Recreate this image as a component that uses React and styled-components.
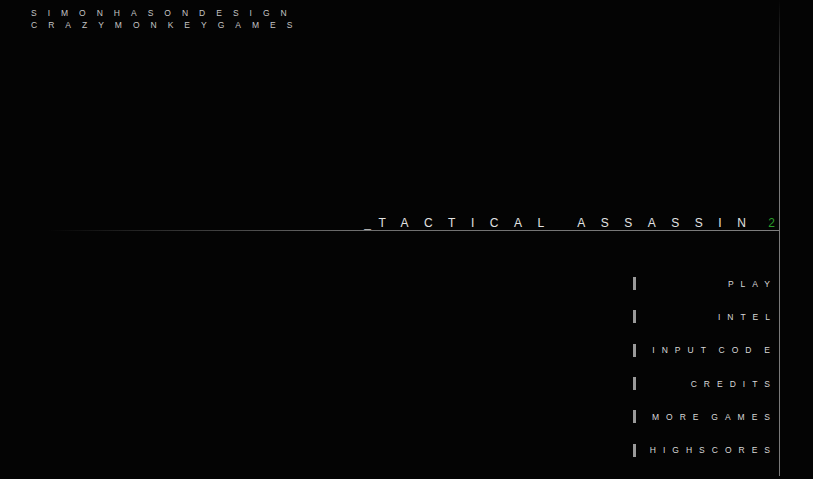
import styled, { createGlobalStyle } from "styled-components";

const GlobalStyle = createGlobalStyle`
  html, body {
    margin: 0;
    padding: 0;
    background: #040404;
  }
  body {
    font-family: "Liberation Sans", Arial, sans-serif;
    -webkit-font-smoothing: antialiased;
  }
`;

const Screen = styled.div`
  width: 813px;
  height: 479px;
  display: flex;
  background: #040404;
  overflow: hidden;
`;

const Stage = styled.div`
  width: 779px;
  display: flex;
  flex-direction: column;
`;

const SideRule = styled.div`
  width: 1px;
  height: 476px;
  background: linear-gradient(to bottom, rgba(120, 120, 120, 0) 0px, #7a7a7a 120px, #7a7a7a 100%);
`;

const Credits = styled.div`
  padding: 7px 0 0 31px;
  font-size: 8.5px;
  line-height: 12px;
  letter-spacing: 11px;
  color: #c4c4c4;
`;

const Title = styled.div`
  margin-top: 185px;
  padding-right: 4px;
  display: flex;
  justify-content: flex-end;
  align-items: baseline;
  font-size: 12px;
  line-height: 14px;
  color: #e2e2e2;
  white-space: pre;
`;

const Underscore = styled.span`
  letter-spacing: 7.5px;
  color: #bdbdbd;
`;

const TitleWord = styled.span`
  letter-spacing: 15.5px;
`;

const Sequel = styled.span`
  margin-left: 7px;
  color: #2a9e2a;
`;

const HorizonRule = styled.div`
  height: 1px;
  margin-left: 48px;
  background: linear-gradient(to right, rgba(128, 128, 128, 0) 0px, #6e6e6e 300px, #7e7e7e 100%);
`;

const Menu = styled.nav`
  margin-top: 36px;
  align-self: flex-end;
  width: 146px;
  display: flex;
  flex-direction: column;
`;

const MenuRow = styled.div`
  height: 33.3px;
  display: flex;
  align-items: center;
  justify-content: space-between;
  padding-right: 2px;
  cursor: pointer;
`;

const Marker = styled.span`
  width: 3px;
  height: 13px;
  background: #9a9a9a;
`;

const Label = styled.span`
  font-size: 8.5px;
  letter-spacing: 7px;
  word-spacing: -3.5px;
  color: #d8d8d8;
  white-space: pre;
`;

const items = ["PLAY", "INTEL", "INPUT COD E", "CREDITS", "MORE GAMES", "HIGHSCORES"];

export default function App() {
  return (
    <>
      <GlobalStyle />
      <Screen>
        <Stage>
          <Credits>
            <div>SIMONHASONDESIGN</div>
            <div>CRAZYMONKEYGAMES</div>
          </Credits>
          <Title>
            <Underscore>_</Underscore>
            <TitleWord>TACTICAL ASSASSIN</TitleWord>
            <Sequel>2</Sequel>
          </Title>
          <HorizonRule />
          <Menu>
            {items.map((item) => (
              <MenuRow key={item}>
                <Marker />
                <Label>{item}</Label>
              </MenuRow>
            ))}
          </Menu>
        </Stage>
        <SideRule />
      </Screen>
    </>
  );
}
